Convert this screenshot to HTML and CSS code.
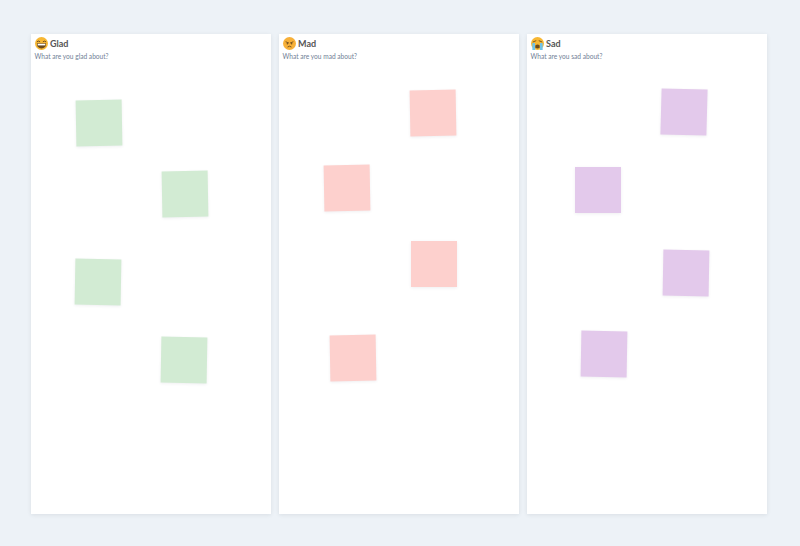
FILE: index.html
```html
<!DOCTYPE html>
<html lang="en">
<head>
    <meta charset="UTF-8">
    <meta name="viewport" content="width=device-width, initial-scale=1.0">
    <title>Retro board</title>
    <link rel="stylesheet" href="styles.css">
</head>
<body>

<div class="board">
    <section class="column">
        <div class="column-title">
            <svg class="emoji" viewBox="0 0 24 24">
                <circle cx="12" cy="12" r="12" fill="#f7b733"/>
                <path d="M4 8.500q2.500-2.500 5 0M15 8.500q2.500-2.500 5 0" fill="none" stroke="#6b4a1e" stroke-width="1.800" stroke-linecap="round"/>
                <path d="M3.500 11.500h17q0 9.500-8.500 9.500t-8.500-9.500z" fill="#6b4a1e"/>
                <path d="M5 12.500h14v3h-14z" fill="#fff"/>
            </svg>
            <h2>Glad</h2>
        </div>
        <p class="column-hint">What are you glad about?</p>
        <div class="note green glad-1"></div>
        <div class="note green glad-2"></div>
        <div class="note green glad-3"></div>
        <div class="note green glad-4"></div>
    </section>

    <section class="column">
        <div class="column-title">
            <svg class="emoji" viewBox="0 0 24 24">
                <circle cx="12" cy="12" r="12" fill="#f7b038"/>
                <path d="M5.500 9l5 2M18.500 9l-5 2" fill="none" stroke="#6b4a1e" stroke-width="1.600" stroke-linecap="round"/>
                <circle cx="8" cy="12.500" r="1.300" fill="#6b4a1e"/>
                <circle cx="16" cy="12.500" r="1.300" fill="#6b4a1e"/>
                <path d="M9 18q3-2.500 6 0" fill="none" stroke="#6b4a1e" stroke-width="1.600" stroke-linecap="round"/>
            </svg>
            <h2>Mad</h2>
        </div>
        <p class="column-hint">What are you mad about?</p>
        <div class="note red mad-1"></div>
        <div class="note red mad-2"></div>
        <div class="note red mad-3"></div>
        <div class="note red mad-4"></div>
    </section>

    <section class="column">
        <div class="column-title">
            <svg class="emoji" viewBox="0 0 24 24">
                <circle cx="12" cy="12" r="12" fill="#f7b733"/>
                <path d="M4 9l5-2M20 9l-5-2" fill="none" stroke="#6b4a1e" stroke-width="1.600" stroke-linecap="round"/>
                <path d="M2.500 11h5v13h-5zM16.500 11h5v13h-5z" fill="#6fc3ea"/>
                <path d="M8 15.500q4-3.500 8 0v4.500q-4 2-8 0z" fill="#6b4a1e"/>
            </svg>
            <h2>Sad</h2>
        </div>
        <p class="column-hint">What are you sad about?</p>
        <div class="note purple sad-1"></div>
        <div class="note purple sad-2"></div>
        <div class="note purple sad-3"></div>
        <div class="note purple sad-4"></div>
    </section>
</div>

</body>
</html>
```

FILE: styles.css
```css
body {
    margin: 0;
    height: 546px;
    overflow: hidden;
    background-color: #edf2f7;
    font-family: "Lato", sans-serif;
}

.board {
    display: flex;
    gap: 8px;
    padding: 34px 33px 0 30.500px;
}

.column {
    position: relative;
    width: 240px;
    height: 480px;
    box-sizing: border-box;
    padding: 3px 4px;
    background-color: #fff;
    box-shadow: 0 1px 4px rgba(45, 55, 72, 0.1);
}

.column-title {
    display: flex;
    align-items: center;
    gap: 2.500px;
    height: 13px;
}

.emoji {
    width: 13px;
    height: 13px;
}

.column-title h2 {
    margin: 0;
    font-size: 9px;
    font-weight: 700;
    line-height: 13px;
    color: #555;
}

.column-hint {
    margin: 1px 0 0;
    font-size: 6.600px;
    font-weight: 400;
    line-height: 10px;
    color: #718096;
}

.note {
    position: absolute;
    width: 46px;
    height: 46px;
    box-shadow: 0 1px 3px rgba(45, 55, 72, 0.08);
}

.green { background-color: #d2ebd3; }
.red { background-color: #fdd0cd; }
.purple { background-color: #e3c9eb; }

.glad-1 { left: 45.500px; top: 66px; transform: rotate(-1deg); }
.glad-2 { left: 131.500px; top: 137px; transform: rotate(-1deg); }
.glad-3 { left: 44.500px; top: 225px; transform: rotate(1deg); }
.glad-4 { left: 130.500px; top: 303px; transform: rotate(1deg); }

.mad-1 { left: 131px; top: 56px; transform: rotate(-1deg); }
.mad-2 { left: 45px; top: 131px; transform: rotate(-1deg); }
.mad-3 { left: 132.500px; top: 207px; }
.mad-4 { left: 51.500px; top: 301px; transform: rotate(-1deg); }

.sad-1 { left: 134.500px; top: 54.500px; transform: rotate(1.500deg); }
.sad-2 { left: 48.500px; top: 133px; }
.sad-3 { left: 136.500px; top: 216px; transform: rotate(1deg); }
.sad-4 { left: 54px; top: 297px; transform: rotate(1deg); }
```
